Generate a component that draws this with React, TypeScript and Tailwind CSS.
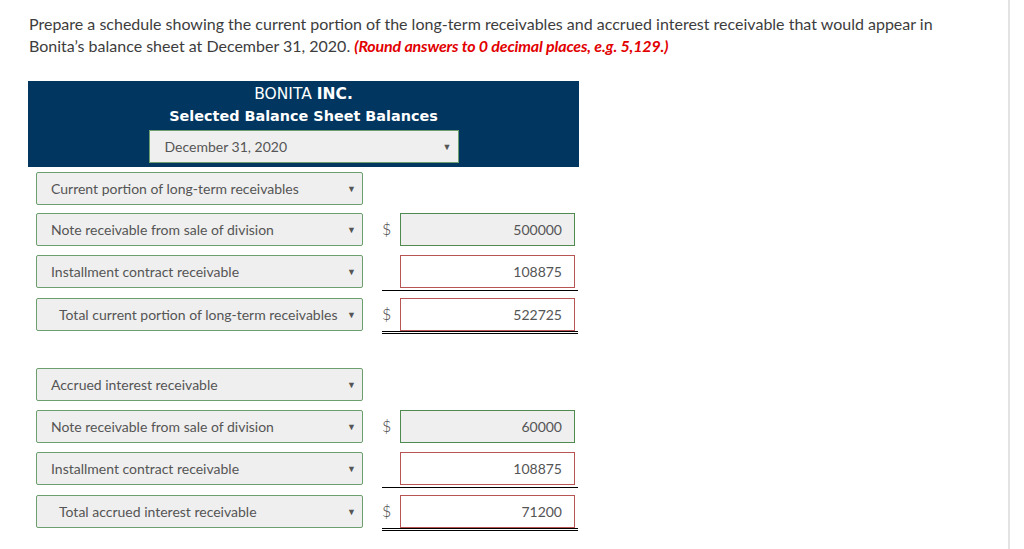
import React from "react";

const lato = { fontFamily: "Lato, 'Open Sans', sans-serif" };
const dejavu = { fontFamily: "'DejaVu Sans', Verdana, sans-serif" };

function Select({ label, indent = false }: { label: string; indent?: boolean }) {
  return (
    <div className="flex h-[33px] w-[327px] items-center justify-between rounded-[2px] border border-[#6d9e6d] bg-[#efefef] pr-[6px] text-[14px] text-[#555]">
      <span className={indent ? "pl-[22px]" : "pl-[14px]"}>{label}</span>
      <span className="text-[9px] text-[#555]">▼</span>
    </div>
  );
}

function Amount({
  value,
  tone,
  dollar,
  line,
}: {
  value: string;
  tone: "green" | "red";
  dollar?: boolean;
  line?: "single" | "double";
}) {
  const box =
    tone === "green"
      ? "border-[#4f8a4f] bg-[#efefef]"
      : "border-[#b85454] bg-white";
  const under =
    line === "single"
      ? "border-b border-black"
      : line === "double"
      ? "border-b-[3px] border-double border-black"
      : "";
  return (
    <div className={`ml-[19px] flex h-[36px] w-[196px] items-start ${under}`}>
      <span className="w-[18px] pt-[4px] text-[16px] font-light text-[#444]">{dollar ? "$" : ""}</span>
      <div
        className={`flex h-[33px] w-[175px] items-center justify-end border pr-[12px] text-[14px] text-[#555] ${box}`}
      >
        {value}
      </div>
    </div>
  );
}

function Row({
  label,
  indent,
  amount,
  h = "h-[42px]",
}: {
  label: string;
  indent?: boolean;
  amount?: { value: string; tone: "green" | "red"; dollar?: boolean; line?: "single" | "double" };
  h?: string;
}) {
  return (
    <div className={`flex items-start pl-[8px] ${h}`}>
      <Select label={label} indent={indent} />
      {amount && <Amount {...amount} />}
    </div>
  );
}

export default function App() {
  return (
    <div className="relative min-h-[549px] w-[1024px] bg-white" style={lato}>
      <div className="absolute right-[14px] top-0 h-[549px] w-[2px] bg-[#e3e3e3]" />
      <div className="pl-[29px] pt-[13px]">
        <p className="w-[940px] text-[16px] leading-[22px] text-[#3d3d3d]">
          Prepare a schedule showing the current portion of the long-term receivables and accrued interest receivable that would appear in
          <br />
          Bonita’s balance sheet at December 31, 2020.{" "}
          <span className="font-bold italic tracking-[-0.15px] text-[#e20000]">
            (Round answers to 0 decimal places, e.g. 5,129.)
          </span>
        </p>
      </div>
      <div className="ml-[28px] mt-[24px] w-[551px]">
        <div className="flex h-[86px] flex-col items-center bg-[#00365f] pt-[2px] text-white">
          <div className="text-[15.5px] leading-[22px]" style={dejavu}>
            <span>BONITA</span> <span className="font-bold">INC.</span>
          </div>
          <div className="text-[14.4px] font-bold leading-[22px]" style={dejavu}>
            Selected Balance Sheet Balances
          </div>
          <div className="mt-[3px] flex h-[33px] w-[310px] items-center justify-between border border-[#6d9e6d] bg-[#efefef] pl-[15px] pr-[6px] text-[14px] text-[#555]">
            <span>December 31, 2020</span>
            <span className="text-[9px]">▼</span>
          </div>
        </div>
        <div className="pt-[5px]">
          <Row label="Current portion of long-term receivables" h="h-[41px]" />
          <Row
            label="Note receivable from sale of division"
            amount={{ value: "500000", tone: "green", dollar: true }}
          />
          <Row
            label="Installment contract receivable"
            h="h-[43px]"
            amount={{ value: "108875", tone: "red", line: "single" }}
          />
          <Row
            label="Total current portion of long-term receivables"
            indent
            h="h-[70px]"
            amount={{ value: "522725", tone: "red", dollar: true, line: "double" }}
          />
          <Row label="Accrued interest receivable" />
          <Row
            label="Note receivable from sale of division"
            amount={{ value: "60000", tone: "green", dollar: true }}
          />
          <Row
            label="Installment contract receivable"
            h="h-[43px]"
            amount={{ value: "108875", tone: "red", line: "single" }}
          />
          <Row
            label="Total accrued interest receivable"
            indent
            amount={{ value: "71200", tone: "red", dollar: true, line: "double" }}
          />
        </div>
      </div>
    </div>
  );
}
